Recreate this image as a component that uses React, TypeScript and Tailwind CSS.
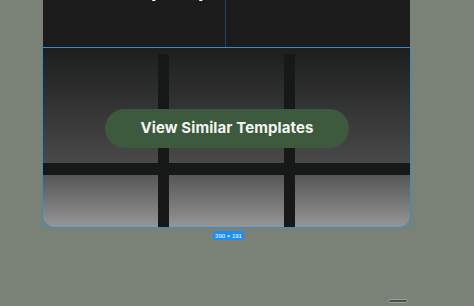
import React from "react";

export default function App() {
  return (
    <div className="w-[474px] h-[306px] bg-[#7a8278] relative overflow-hidden" style={{ fontFamily: "Inter, 'Open Sans', sans-serif" }}>
      <div className="ml-[43px] w-[367px] flex flex-col">
        {/* top panel */}
        <div className="h-[47px] bg-[#1b1c1b] flex relative overflow-hidden">
          <div className="w-[183px] border-r border-[#25435c]" />
          <div className="flex-1" />
          <span className="absolute left-[108px] top-[-20px] text-white text-[20px] font-bold leading-[20px]">p</span>
          <span className="absolute left-[155px] top-[-20px] text-white text-[20px] font-bold leading-[20px]">p</span>
        </div>
        {/* selected box */}
        <div className="h-[181px] relative border border-[#3a8cc8] -mx-px">
          <div className="h-full rounded-b-[12px] bg-gradient-to-b from-[#1d1e1e] via-[#4a4a4a] via-65% to-[#969696] overflow-hidden pt-[6px]">
            <div className="grid grid-cols-[115px_11px_115px_11px_115px] grid-rows-[109px_12px_53px] h-full">
              <div className="col-start-2 row-start-1 row-span-3 bg-[#171918]" />
              <div className="col-start-4 row-start-1 row-span-3 bg-[#171918]" />
              <div className="col-start-1 col-span-5 row-start-2 bg-[#171918]" />
            </div>
          </div>
          <div className="absolute left-[62px] top-[61px] w-[244px] h-[39px] rounded-full bg-[#3d5a3e] flex items-center justify-center">
            <span className="text-[#f3f5f1] text-[15px] font-bold tracking-[0.1px]">View Similar Templates</span>
          </div>
          <div className="absolute left-[170px] top-[183px] w-[31px] h-[9px] bg-[#1c8ff0] rounded-[1px] flex items-center justify-center">
            <span className="text-white text-[6px] leading-none" style={{ fontFamily: "'Liberation Sans', sans-serif" }}>390 × 191</span>
          </div>
        </div>
      </div>
      <div className="absolute left-[388px] top-[299px] w-[20px] h-[4px] rounded-full bg-[#4a4f4a] border border-[#9aa29a]" />
    </div>
  );
}
